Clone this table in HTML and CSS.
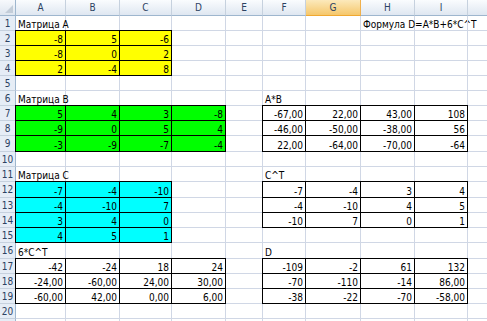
FILE: index.html
```html
<!DOCTYPE html>
<html lang="ru">
<head>
<meta charset="UTF-8">
<meta name="viewport" content="width=device-width, initial-scale=1.0">
<title>Матрицы</title>
<link rel="stylesheet" href="styles.css">
</head>
<body>

<div id="sheet" class="sheet"></div>

<script>
const COLS = ['A', 'B', 'C', 'D', 'E', 'F', 'G', 'H', 'I', 'J'];
const ROWS = 21;
const LAST_LABELLED_ROW = 20;
const ACTIVE_COL = 'G';

// cell values, row by row from column A
const data = {
  1: ['Матрица А', '', '', '', '', '', '', 'Формула D=A*B+6*C^T'],
  2: ['-8', '5', '-6'],
  3: ['-8', '0', '2'],
  4: ['2', '-4', '8'],
  6: ['Матрица В', '', '', '', '', 'A*B'],
  7: ['5', '4', '3', '-8', '', '-67,00', '22,00', '43,00', '108'],
  8: ['-9', '0', '5', '4', '', '-46,00', '-50,00', '-38,00', '56'],
  9: ['-3', '-9', '-7', '-4', '', '22,00', '-64,00', '-70,00', '-64'],
  11: ['Матрица С', '', '', '', '', 'C^T'],
  12: ['-7', '-4', '-10', '', '', '-7', '-4', '3', '4'],
  13: ['-4', '-10', '7', '', '', '-4', '-10', '4', '5'],
  14: ['3', '4', '0', '', '', '-10', '7', '0', '1'],
  15: ['4', '5', '1'],
  16: ['6*C^T', '', '', '', '', 'D'],
  17: ['-42', '-24', '18', '24', '', '-109', '-2', '61', '132'],
  18: ['-24,00', '-60,00', '24,00', '30,00', '', '-70', '-110', '-14', '86,00'],
  19: ['-60,00', '42,00', '0,00', '6,00', '', '-38', '-22', '-70', '-58,00']
};

// bordered blocks, some of them filled
const blocks = [
  { c1: 'A', r1: 2, c2: 'C', r2: 4, fill: 'yellow' },
  { c1: 'A', r1: 7, c2: 'D', r2: 9, fill: 'green' },
  { c1: 'A', r1: 12, c2: 'C', r2: 15, fill: 'cyan' },
  { c1: 'A', r1: 17, c2: 'D', r2: 19 },
  { c1: 'F', r1: 7, c2: 'I', r2: 9 },
  { c1: 'F', r1: 12, c2: 'I', r2: 14 },
  { c1: 'F', r1: 17, c2: 'I', r2: 19 }
];

function findBlock(col, row) {
  const i = COLS.indexOf(col);
  return blocks.find(b =>
    i >= COLS.indexOf(b.c1) && i <= COLS.indexOf(b.c2) && row >= b.r1 && row <= b.r2);
}

function addCell(parent, cls, text) {
  const el = document.createElement('div');
  el.className = cls;
  if (text) el.textContent = text;
  parent.appendChild(el);
  return el;
}

function buildSheet() {
  const sheet = document.getElementById('sheet');

  // column headers; the last column is only partly in view, its letter is off screen
  addCell(sheet, 'corner');
  COLS.forEach((col, i) => {
    const label = i < COLS.length - 1 ? col : '';
    addCell(sheet, col === ACTIVE_COL ? 'col-head active' : 'col-head', label);
  });

  for (let row = 1; row <= ROWS; row++) {
    addCell(sheet, 'row-head', row <= LAST_LABELLED_ROW ? String(row) : '');
    const values = data[row] || [];

    COLS.forEach((col, i) => {
      const value = values[i] || '';
      let cls = 'cell';
      if (/^-?[\d,]+$/.test(value)) cls += ' num';
      const block = findBlock(col, row);
      if (block) {
        cls += ' boxed';
        if (block.fill) cls += ' ' + block.fill;
      }
      addCell(sheet, cls, value);
    });
  }
}

buildSheet();
</script>

</body>
</html>
```

FILE: styles.css
```css
body {
  margin: 0;
  background-color: #fff;
  overflow: hidden;
  font-family: "Liberation Sans Narrow", "DejaVu Sans Condensed", "Liberation Sans", sans-serif;
  font-size: 10px;
  color: #000;
}

.sheet {
  display: grid;
  grid-template-columns: 16px 50px 54px 52px 54px 37px 43px 55px 54px 53px 40px;
  grid-template-rows: 16px repeat(8, 15px) 16px 15px 15px 16px 15px 15px 15px 16px repeat(5, 15px);
}

/* headers */
.corner {
  position: relative;
  background: linear-gradient(#f7f9fc, #dde5ef);
  border-right: 1px solid #9eb6ce;
  border-bottom: 1px solid #9eb6ce;
}

.corner::after {
  content: "";
  position: absolute;
  right: 2px;
  bottom: 2px;
  border-left: 8px solid transparent;
  border-bottom: 8px solid #c3cdd9;
}

.col-head {
  display: flex;
  align-items: center;
  justify-content: center;
  background: linear-gradient(#fafcfe, #dfe7f1);
  border-right: 1px solid #c6d1de;
  border-bottom: 1px solid #9eb6ce;
  color: #2c4262;
}

.col-head.active {
  background: linear-gradient(#fce9bb, #f5c76b);
  border-right-color: #f0b04c;
  border-bottom-color: #f0a830;
}

.row-head {
  display: flex;
  align-items: center;
  justify-content: center;
  background-color: #e6edf6;
  border-right: 1px solid #9eb6ce;
  border-bottom: 1px solid #c6d1de;
  color: #2c4262;
}

/* cells */
.cell {
  display: flex;
  align-items: flex-end;
  padding: 0 2px;
  line-height: 11px;
  white-space: nowrap;
  border-right: 1px solid #d0d7e5;
  border-bottom: 1px solid #d0d7e5;
}

.num {
  justify-content: flex-end;
}

/* bordered block: pulled over the neighbours' grid lines */
.boxed {
  margin: -1px 0 0 -1px;
  border: 1px solid #000;
}

.yellow {
  background-color: #ffff00;
}

.green {
  background-color: #00ff00;
}

.cyan {
  background-color: #00ffff;
}
```
